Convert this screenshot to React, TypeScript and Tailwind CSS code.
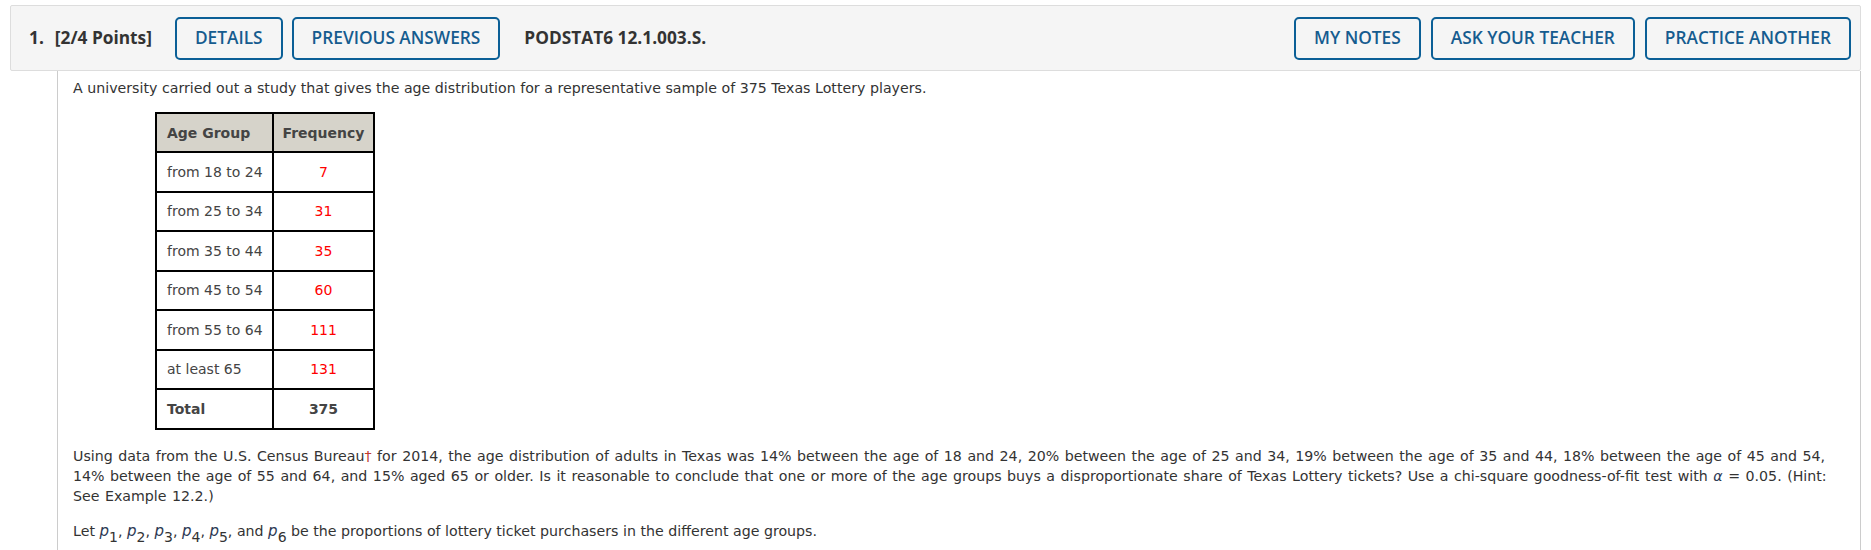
import React from 'react';

const rows = [
    ['from 18 to 24', '7'],
    ['from 25 to 34', '31'],
    ['from 35 to 44', '35'],
    ['from 45 to 54', '60'],
    ['from 55 to 64', '111'],
    ['at least 65', '131'],
];

const leftButtons = ['DETAILS', 'PREVIOUS ANSWERS'];
const rightButtons = ['MY NOTES', 'ASK YOUR TEACHER', 'PRACTICE ANOTHER'];

function HeaderButton({ label }: { label: string }) {
    return (
        <button className="h-[43px] rounded-[5px] border-2 border-[#0b5f96] bg-transparent px-[18px] font-semibold text-[#155c8f]">
            {label}
        </button>
    );
}

function P({ n, last }: { n: number; last?: boolean }) {
    return (
        <>
            <i className="text-[15px] text-[#2d3a55]">p</i>
            <span className="relative top-[6px] text-[14px] text-[#333]">{n}</span>
            {!last && <span>, </span>}
        </>
    );
}

export default function App() {
    return (
        <div className="min-h-screen bg-white px-[10px] pt-[5px]">
            {/* Question header */}
            <div className="flex h-[66px] items-center rounded-[2px] border border-[#dddddd] bg-[#f5f5f5] pl-[18px] pr-[9px] font-['Open_Sans',sans-serif] text-[17.3px]">
                <span className="font-bold text-[#333]">1.</span>
                <span className="ml-[11px] font-bold text-[#333]">[2/4 Points]</span>
                <div className="ml-[23px] flex gap-[9px]">
                    {leftButtons.map((b) => (
                        <HeaderButton key={b} label={b} />
                    ))}
                </div>
                <span className="ml-[24px] font-bold text-[#333]">PODSTAT6 12.1.003.S.</span>
                <div className="ml-auto flex gap-[10px]">
                    {rightButtons.map((b) => (
                        <HeaderButton key={b} label={b} />
                    ))}
                </div>
            </div>

            {/* Question body */}
            <div className="ml-[47px] min-h-[480px] border-x border-[#cccccc] pl-[15px] pr-[15px] pt-[7px] font-['Verdana','DejaVu_Sans',sans-serif] text-[14.2px] leading-[20px] text-[#333]">
                <p>
                    A university carried out a study that gives the age distribution for a representative sample of 375 Texas Lottery players.
                </p>

                <table className="ml-[82px] mt-[14px] border-collapse border-2 border-black text-[14px] text-[#444]">
                    <thead>
                        <tr className="h-[39px] bg-[#d6d3ca]">
                            <th className="w-[117px] border-2 border-black pl-[10px] text-left font-bold">Age Group</th>
                            <th className="w-[101px] border-2 border-black text-center font-bold">Frequency</th>
                        </tr>
                    </thead>
                    <tbody>
                        {rows.map(([group, freq]) => (
                            <tr key={group} className="h-[39.5px]">
                                <td className="border-2 border-black pl-[10px]">{group}</td>
                                <td className="border-2 border-black text-center text-[#ff0000]">{freq}</td>
                            </tr>
                        ))}
                        <tr className="h-[39.5px]">
                            <td className="border-2 border-black pl-[10px] font-bold">Total</td>
                            <td className="border-2 border-black text-center font-bold">375</td>
                        </tr>
                    </tbody>
                </table>

                <p className="mt-[16px] [word-spacing:1px]">
                    Using data from the U.S. Census Bureau<span className="text-[#c0392b]">&dagger;</span> for 2014, the age distribution of adults in Texas was 14% between the age of 18 and 24, 20% between the age of 25 and 34, 19% between the age of 35 and 44, 18% between the age of 45 and 54, 14% between the age of 55 and 64, and 15% aged 65 or older. Is it reasonable to conclude that one or more of the age groups buys a disproportionate share of Texas Lottery tickets? Use a chi-square goodness-of-fit test with <i className="text-[#2d3a55]">&alpha;</i> = 0.05. (Hint: See Example 12.2.)
                </p>

                <p className="mt-[15px]">
                    Let <P n={1} />
                    <P n={2} />
                    <P n={3} />
                    <P n={4} />
                    <P n={5} />
                    and <P n={6} last /> be the proportions of lottery ticket purchasers in the different age groups.
                </p>
            </div>
        </div>
    );
}
